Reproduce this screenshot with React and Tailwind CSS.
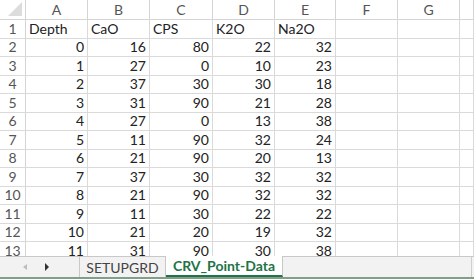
const cols = ["A", "B", "C", "D", "E", "F", "G", ""];
const widths = ["w-[62px]", "w-[62px]", "w-[63px]", "w-[62px]", "w-[61px]", "w-[62px]", "w-[62px]", "flex-1"];

const rows = [
    ["Depth", "CaO", "CPS", "K2O", "Na2O"],
    [0, 16, 80, 22, 32],
    [1, 27, 0, 10, 23],
    [2, 37, 30, 30, 18],
    [3, 31, 90, 21, 28],
    [4, 27, 0, 13, 38],
    [5, 11, 90, 32, 24],
    [6, 21, 90, 20, 13],
    [7, 37, 30, 32, 32],
    [8, 21, 90, 32, 32],
    [9, 11, 30, 22, 22],
    [10, 21, 20, 19, 32],
    [11, 31, 90, 30, 38],
];

export default function App() {
    return (
        <div
            className="w-[474px] h-[279px] bg-white overflow-hidden flex flex-col text-[#222] text-[14px]"
            style={{ fontFamily: "Lato, 'Open Sans', sans-serif" }}
        >
            <div className="flex-1 overflow-hidden">
                {/* column headers */}
                <div className="flex h-[20px] border-b border-[#d4d4d4]">
                    <div className="w-[26px] shrink-0 border-r border-[#d4d4d4] relative">
                        <div className="absolute right-[3px] bottom-[3px] w-0 h-0 border-l-[14px] border-l-transparent border-b-[14px] border-b-[#dcdcdc]" />
                    </div>
                    {cols.map((c, i) => (
                        <div
                            key={i}
                            className={`${widths[i]} shrink-0 border-r border-[#d4d4d4] flex items-center justify-center text-[#555] leading-none`}
                        >
                            {c}
                        </div>
                    ))}
                </div>
                {rows.map((r, ri) => (
                    <div key={ri} className="flex h-[18.5px] border-b border-[#dadada]">
                        <div className="w-[26px] shrink-0 border-r border-[#d4d4d4] flex items-center justify-center text-[#555] leading-none">
                            {ri + 1}
                        </div>
                        {cols.map((c, ci) => {
                            const v = r[ci];
                            const isNum = typeof v === "number";
                            return (
                                <div
                                    key={ci}
                                    className={`${widths[ci]} shrink-0 border-r border-[#dadada] flex items-center leading-none px-[3px] ${isNum ? "justify-end" : "justify-start"}`}
                                >
                                    {v}
                                </div>
                            );
                        })}
                    </div>
                ))}
            </div>

            {/* sheet tabs */}
            <div className="h-[21px] shrink-0 flex bg-[#f2f2f2] border-t border-[#c8c8c8] text-[#444]">
                <div className="w-[80px] flex items-center border-r border-[#c8c8c8]">
                    <span className="ml-[23px] w-0 h-0 border-y-[3px] border-y-transparent border-r-[4px] border-r-[#bdbdbd]" />
                    <span className="ml-[18px] w-0 h-0 border-y-[4px] border-y-transparent border-l-[4px] border-l-[#333]" />
                </div>
                <div className="w-[86px] flex items-center justify-center border-r border-[#c8c8c8] text-[14px]">
                    SETUPGRD
                </div>
                <div className="w-[117px] -mt-px flex items-center justify-center bg-white border-r border-[#c8c8c8] border-b-2 border-b-[#217346] font-bold text-[#217346] text-[14px]">
                    CRV_Point-Data
                </div>
                <div className="flex-1 border-r border-[#d0d0d0] mr-[2px]" />
            </div>
            <div className="h-[2px] shrink-0 bg-[#7f9f89]" />
        </div>
    );
}
